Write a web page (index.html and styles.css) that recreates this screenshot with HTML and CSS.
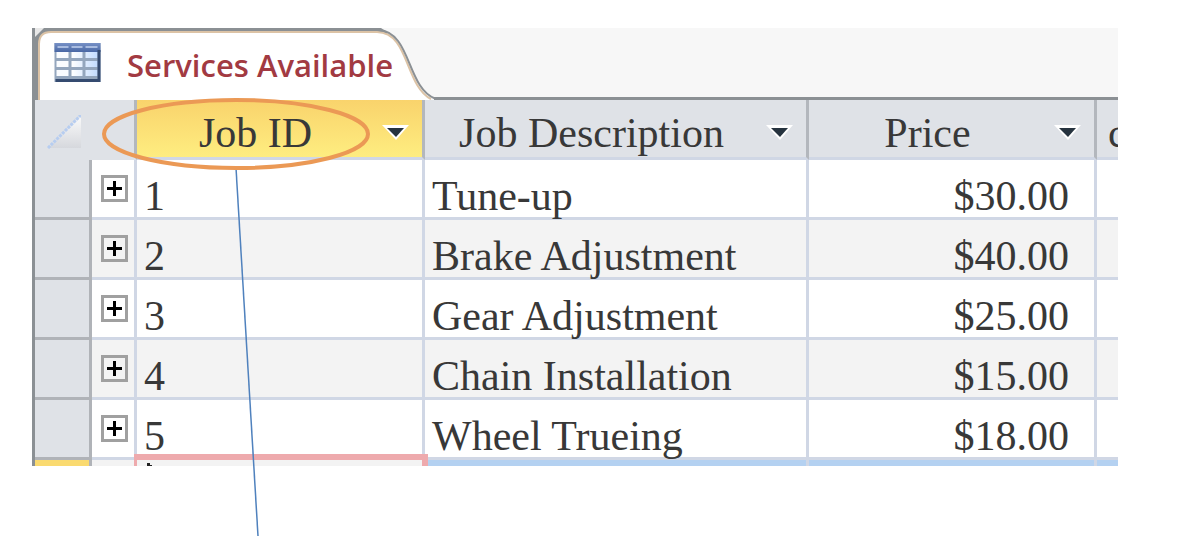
FILE: index.html
```html
<!DOCTYPE html>
<html lang="en">
<head>
<meta charset="utf-8">
<title>Services Available</title>
<link rel="stylesheet" href="styles.css">
</head>
<body>
<main class="datasheet">
  <header class="tab-strip">
    <svg class="tab-shape" viewBox="0 0 405 72" aria-hidden="true">
      <path d="M0 0H405V72H0Z" fill="#f7f7f7"/>
      <path d="M0 0H346L352 4V30H0Z" fill="#8b9094"/>
      <path d="M0 0H9L0 9Z" fill="#e8e8e8"/>
      <path d="M0 72V14Q0 9 4 7V72Z" fill="#8b9094"/>
      <path d="M4 72V16Q4 4 16 4H342C374 4 370 58 396 72Z" fill="#fff"/>
      <path d="M4 72V16Q4 4 16 4H342C374 4 370 58 396 71" fill="none" stroke="#dcc3a6" stroke-width="2"/>
      <path d="M344 2C376 4 372 60 400 70.500H405" fill="none" stroke="#8b9094" stroke-width="2"/>
      <path d="M399 70.500H405" stroke="#8b9094" stroke-width="3"/>
    </svg>
    <div class="tab">
      <svg class="table-icon" viewBox="0 0 46 39" aria-hidden="true">
        <defs>
          <linearGradient id="bar" x2="0" y2="1"><stop stop-color="#7791c6"/><stop offset="1" stop-color="#4967a4"/></linearGradient>
          <linearGradient id="cell"><stop stop-color="#fff"/><stop offset="1" stop-color="#c3dcff"/></linearGradient>
        </defs>
        <path d="M0 0H46V39H0Z" fill="#94a6bd"/>
        <path d="M0 0H46V9H0Z" fill="url(#bar)"/>
        <path d="M3 4H14M17 4H28M31 4H43" stroke="#a9bce0" stroke-width="2"/>
        <path d="M2 9H14V15H2ZM2 18H14V24H2ZM2 27H14V33H2Z" fill="#fafcff"/>
        <path d="M17 9H28V15H17ZM17 18H28V24H17ZM17 27H28V33H17ZM31 9H43V15H31ZM31 18H43V24H31ZM31 27H43V33H31Z" fill="url(#cell)"/>
        <path d="M44.500 7V37.500H1" fill="none" stroke="#354b70" stroke-width="3"/>
      </svg>
      <span class="tab-title">Services Available</span>
    </div>
  </header>

  <table class="grid">
    <colgroup><col class="col-selector"><col class="col-expand"><col class="col-id"><col class="col-description"><col class="col-price"><col></colgroup>
    <thead>
      <tr>
        <th class="corner" colspan="2">
          <svg class="corner-icon" viewBox="0 0 34 34" aria-hidden="true">
            <defs><linearGradient id="fold" x2="0" y2="1"><stop stop-color="#fafafa"/><stop offset="1" stop-color="#d6d8dd"/></linearGradient></defs>
            <path d="M34 1V33H1Z" fill="url(#fold)"/><path d="M1 33L34 0" stroke="#b7cdf0" stroke-width="3" stroke-dasharray="3 1"/>
          </svg>
        </th>
        <th class="active" scope="col"><div class="heading"><span class="label">Job ID</span><button class="menu" aria-label="Job ID options"><svg class="arrow" viewBox="0 0 27 15"><path d="M0 0H27L14 15Z" fill="#fff"/><path d="M5 3H22L14 12Z" fill="#26333f"/></svg></button></div></th>
        <th scope="col"><div class="heading"><span class="label">Job Description</span><button class="menu" aria-label="Job Description options"><svg class="arrow" viewBox="0 0 27 15"><path d="M0 0H27L14 15Z" fill="#fff"/><path d="M5 3H22L14 12Z" fill="#26333f"/></svg></button></div></th>
        <th scope="col"><div class="heading"><span class="label">Price</span><button class="menu" aria-label="Price options"><svg class="arrow" viewBox="0 0 27 15"><path d="M0 0H27L14 15Z" fill="#fff"/><path d="M5 3H22L14 12Z" fill="#26333f"/></svg></button></div></th>
        <th class="partial" scope="col">c</th>
      </tr>
    </thead>
    <tbody>
      <tr><td class="selector"></td><td class="expand"><button class="plus" aria-label="Expand 1"><svg viewBox="0 0 21 21"><path d="M3 10.500H18M10.500 3V18"/></svg></button></td><td>1</td><td>Tune-up</td><td class="price">$30.00</td><td></td></tr>
      <tr><td class="selector"></td><td class="expand"><button class="plus" aria-label="Expand 2"><svg viewBox="0 0 21 21"><path d="M3 10.500H18M10.500 3V18"/></svg></button></td><td>2</td><td>Brake Adjustment</td><td class="price">$40.00</td><td></td></tr>
      <tr><td class="selector"></td><td class="expand"><button class="plus" aria-label="Expand 3"><svg viewBox="0 0 21 21"><path d="M3 10.500H18M10.500 3V18"/></svg></button></td><td>3</td><td>Gear Adjustment</td><td class="price">$25.00</td><td></td></tr>
      <tr><td class="selector"></td><td class="expand"><button class="plus" aria-label="Expand 4"><svg viewBox="0 0 21 21"><path d="M3 10.500H18M10.500 3V18"/></svg></button></td><td>4</td><td>Chain Installation</td><td class="price">$15.00</td><td></td></tr>
      <tr><td class="selector"></td><td class="expand"><button class="plus" aria-label="Expand 5"><svg viewBox="0 0 21 21"><path d="M3 10.500H18M10.500 3V18"/></svg></button></td><td>5</td><td>Wheel Trueing</td><td class="price">$18.00</td><td></td></tr>
      <tr class="next-row"><td class="selector"></td><td></td><td class="editing"><span class="edit-outline"></span><svg class="caret" viewBox="0 0 5 6" aria-hidden="true"><path d="M0 3H3V5H5V6H0Z" fill="#222"/></svg></td><td></td><td></td><td></td></tr>
    </tbody>
  </table>
</main>
<svg class="callout" viewBox="0 0 400 536" aria-hidden="true">
  <path d="M236 168L258 536" stroke="#4f81bd" stroke-width="1.500"/>
  <ellipse cx="236" cy="134" rx="132" ry="34" fill="none" stroke="#eb9955" stroke-width="4"/>
</svg>
</body>
</html>
```
FILE: styles.css
```css
* { box-sizing: border-box; }

body {
  margin: 0;
  padding: 28px 86px 70px 32px;
  background: #fff;
  position: relative;
}

.datasheet {
  border-left: 3px solid #8b9094;
  overflow: hidden;
}

.tab-strip {
  position: relative;
  height: 72px;
  background: #f7f7f7;
  border-bottom: 3px solid #8b9094;
}

.tab-shape {
  position: absolute;
  left: 0;
  top: 0;
  width: 405px;
  height: 72px;
}

.tab {
  position: relative;
  display: flex;
  align-items: flex-start;
  gap: 26px;
  padding: 15px 0 0 19px;
}

.table-icon { width: 47px; height: 39px; }

.tab-title {
  font: 600 31px/44px "Open Sans", sans-serif;
  color: #a23a42;
  white-space: nowrap;
}

.grid {
  width: 100%;
  table-layout: fixed;
  border-collapse: separate;
  border-spacing: 0;
  font: 42px/42px "Liberation Serif", serif;
  color: #383838;
}

.col-selector { width: 57px; }
.col-expand { width: 45px; }
.col-id, .col-price { width: 288px; }
.col-description { width: 384px; }

th {
  height: 60px;
  padding: 8px 0 0;
  font-weight: 400;
  background: #dfe2e7;
  border-right: 3px solid #b3b7bd;
  border-bottom: 3px solid #d0d7e5;
}

.active { background: linear-gradient(#f9d36c, #feed80); }

.corner {
  padding: 0 0 0 12px;
  text-align: left;
  border-bottom-color: #dfe2e7;
}

.corner-icon { display: block; width: 34px; height: 34px; margin-top: 6px; }

.heading { display: flex; align-items: center; }

.label { flex: 1; padding-left: 4px; white-space: nowrap; }

.menu {
  width: 52px;
  height: 42px;
  padding: 0 13px 0 12px;
  border: 0;
  background: none;
}

.arrow { display: block; width: 27px; height: 15px; }

.partial {
  padding-left: 11px;
  border-right: 0;
  text-align: left;
  overflow: hidden;
}

td {
  height: 60px;
  padding: 15px 7px 0;
  vertical-align: top;
  white-space: nowrap;
  background: #fff;
  border-right: 3px solid #d0d7e5;
  border-bottom: 3px solid #d0d7e5;
}

td:last-child { border-right: 0; }

tr:nth-child(even) td { background: #f3f3f3; }

.price { padding-right: 25px; text-align: right; }

tr .selector, tr:nth-child(even) .selector {
  padding: 0;
  background: #dfe2e7;
  border-color: #b0b3b8;
}

.expand { padding: 15px 0 0 9px; }

.plus {
  display: block;
  width: 27px;
  height: 27px;
  padding: 0;
  border: 3px solid #a0a0a0;
  background: none;
}

.plus svg { display: block; width: 21px; height: 21px; stroke: #000; stroke-width: 3; }

.next-row td {
  height: 6px;
  padding: 0;
  line-height: 0;
  font-size: 0;
  border-bottom: 0;
}

.next-row:nth-child(even) td:nth-child(n+4) { background: #b4d1f1; }

.next-row:nth-child(even) .selector { background: #fada70; }

.next-row .editing { position: relative; }

.edit-outline {
  position: absolute;
  inset: -6px -6px 0 -3px;
  border: 6px solid #eeaaad;
  border-left-width: 3px;
  border-bottom: 0;
}

.caret { display: block; width: 5px; height: 6px; margin-left: 10px; }

.callout {
  position: absolute;
  left: 0;
  top: 0;
  width: 400px;
  height: 536px;
  pointer-events: none;
}
```
